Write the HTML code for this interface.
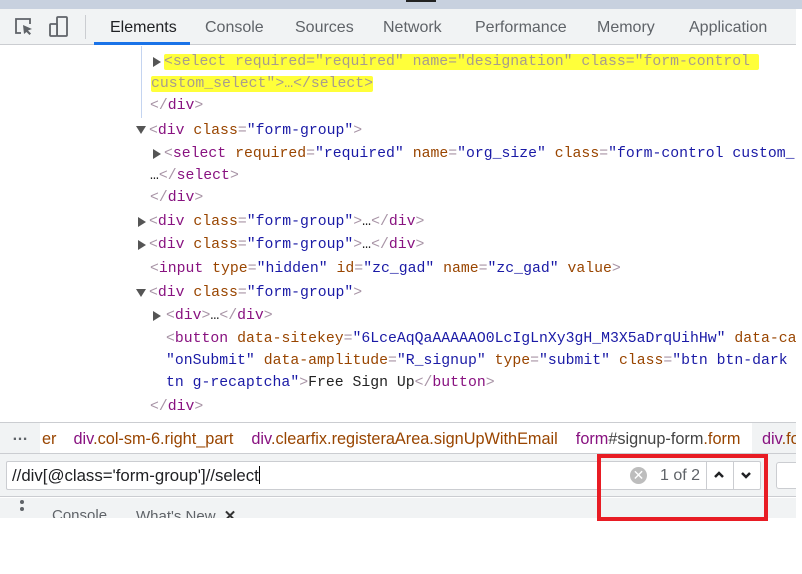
<!DOCTYPE html>
<html><head><meta charset="utf-8"><style>
*{margin:0;padding:0;box-sizing:border-box}
body{width:802px;height:574px;background:#fff;position:relative;overflow:hidden;font-family:"Liberation Sans",sans-serif}
.top{position:absolute;left:0;top:0;width:802px;height:9px;background:#c8d1df}
.tabs{position:absolute;left:0;top:9px;width:796px;height:36px;background:#f1f3f4;border-bottom:1px solid #cbcdd1}
.tab{position:absolute;top:10px;font-size:16px;color:#5f6368}
.code{position:absolute;font-family:"Liberation Mono",monospace;font-size:14.8px;white-space:pre;line-height:20px}
.t{color:#881280}.a{color:#994500}.v{color:#1a1aa6}.g{color:#a894a6}.k{color:#222}
.tri{position:absolute;width:0;height:0}
.r{border-top:5px solid transparent;border-bottom:5px solid transparent;border-left:8px solid #555}
.d{border-left:5px solid transparent;border-right:5px solid transparent;border-top:8px solid #555}
.hl{background:#ffff3a;color:#a89c8c;border-radius:2px}
</style></head><body>
<div class="top"></div>
<div style="position:absolute;left:406px;top:0;width:30px;height:2px;background:#222"></div>
<div class="tabs">
<svg style="position:absolute;left:13px;top:7px" width="22" height="22" viewBox="0 0 22 22"><path d="M8 17H3V3h14v5" fill="none" stroke="#5f6368" stroke-width="1.8"/><path d="M10 9l9 4-4 1.5 3 3-1.5 1.5-3-3L11 18z" fill="#5f6368"/></svg>
<svg style="position:absolute;left:47px;top:6px" width="24" height="24" viewBox="0 0 24 24"><rect x="10" y="2" width="10" height="19" rx="1" fill="none" stroke="#5f6368" stroke-width="1.8"/><rect x="3" y="9" width="7" height="12" rx="1" fill="#f1f3f4" stroke="#5f6368" stroke-width="1.8"/></svg>
<div style="position:absolute;left:85px;top:6px;width:1px;height:24px;background:#cbcdd1"></div>
<div class="tab" style="left:110px;color:#202124">Elements</div>
<div style="position:absolute;left:94px;top:33px;width:96px;height:3px;background:#1a73e8"></div>
<div class="tab" style="left:205px">Console</div>
<div class="tab" style="left:295px">Sources</div>
<div class="tab" style="left:383px">Network</div>
<div class="tab" style="left:475px">Performance</div>
<div class="tab" style="left:597px">Memory</div>
<div class="tab" style="left:689px">Application</div>
</div>
<div style="position:absolute;left:141px;top:46px;width:1px;height:72px;background:#c4d4f0"></div>

<div class="tri r" style="left:153px;top:57px"></div>
<div class="code" style="left:164px;top:52px"><span class="hl">&lt;select required="required" name="designation" class="form-control </span></div>
<div class="code" style="left:151px;top:74px"><span class="hl">custom_select"&gt;…&lt;/select&gt;</span></div>
<div class="code" style="left:150px;top:96px"><span class="g">&lt;/</span><span class="t">div</span><span class="g">&gt;</span></div>
<div class="tri d" style="left:136px;top:126px"></div>
<div class="code" style="left:149px;top:121px"><span class="g">&lt;</span><span class="t">div </span><span class="a">class</span><span class="g">=</span><span class="v">"form-group"</span><span class="g">&gt;</span></div>
<div class="tri r" style="left:153px;top:149px"></div>
<div class="code" style="left:164px;top:144px"><span class="g">&lt;</span><span class="t">select </span><span class="a">required</span><span class="g">=</span><span class="v">"required"</span> <span class="a">name</span><span class="g">=</span><span class="v">"org_size"</span> <span class="a">class</span><span class="g">=</span><span class="v">"form-control custom_</span></div>
<div class="code" style="left:150px;top:166px"><span class="k">…</span><span class="g">&lt;/</span><span class="t">select</span><span class="g">&gt;</span></div>
<div class="code" style="left:150px;top:188px"><span class="g">&lt;/</span><span class="t">div</span><span class="g">&gt;</span></div>
<div class="tri r" style="left:138px;top:217px"></div>
<div class="code" style="left:149px;top:212px"><span class="g">&lt;</span><span class="t">div </span><span class="a">class</span><span class="g">=</span><span class="v">"form-group"</span><span class="g">&gt;</span><span class="k">…</span><span class="g">&lt;/</span><span class="t">div</span><span class="g">&gt;</span></div>
<div class="tri r" style="left:138px;top:240px"></div>
<div class="code" style="left:149px;top:235px"><span class="g">&lt;</span><span class="t">div </span><span class="a">class</span><span class="g">=</span><span class="v">"form-group"</span><span class="g">&gt;</span><span class="k">…</span><span class="g">&lt;/</span><span class="t">div</span><span class="g">&gt;</span></div>
<div class="code" style="left:150px;top:259px"><span class="g">&lt;</span><span class="t">input </span><span class="a">type</span><span class="g">=</span><span class="v">"hidden"</span> <span class="a">id</span><span class="g">=</span><span class="v">"zc_gad"</span> <span class="a">name</span><span class="g">=</span><span class="v">"zc_gad"</span> <span class="a">value</span><span class="g">&gt;</span></div>
<div class="tri d" style="left:136px;top:289px"></div>
<div class="code" style="left:149px;top:283px"><span class="g">&lt;</span><span class="t">div </span><span class="a">class</span><span class="g">=</span><span class="v">"form-group"</span><span class="g">&gt;</span></div>
<div class="tri r" style="left:153px;top:311px"></div>
<div class="code" style="left:166px;top:306px"><span class="g">&lt;</span><span class="t">div</span><span class="g">&gt;</span><span class="k">…</span><span class="g">&lt;/</span><span class="t">div</span><span class="g">&gt;</span></div>
<div class="code" style="left:166px;top:329px"><span class="g">&lt;</span><span class="t">button </span><span class="a">data-sitekey</span><span class="g">=</span><span class="v">"6LceAqQaAAAAAO0LcIgLnXy3gH_M3X5aDrqUihHw"</span> <span class="a">data-ca</span></div>
<div class="code" style="left:166px;top:351px"><span class="v">"onSubmit"</span> <span class="a">data-amplitude</span><span class="g">=</span><span class="v">"R_signup"</span> <span class="a">type</span><span class="g">=</span><span class="v">"submit"</span> <span class="a">class</span><span class="g">=</span><span class="v">"btn btn-dark </span></div>
<div class="code" style="left:166px;top:373px"><span class="v">tn g-recaptcha"</span><span class="g">&gt;</span><span class="k">Free Sign Up</span><span class="g">&lt;/</span><span class="t">button</span><span class="g">&gt;</span></div>
<div class="code" style="left:150px;top:397px"><span class="g">&lt;/</span><span class="t">div</span><span class="g">&gt;</span></div>

<div style="position:absolute;left:0;top:422px;width:796px;height:32px;background:#fff;border-top:1px solid #cbcdd1;border-bottom:1px solid #cbcdd1;font-size:16.3px;white-space:nowrap;overflow:hidden">
<div style="position:absolute;left:0;top:0;width:40px;height:31px;background:#f1f3f4;color:#5f6368;font-size:16px;padding:4px 0 0 12px;font-weight:bold">…</div>
<div style="position:absolute;left:42px;top:7px"><span style="color:#994500">er</span><span style="margin-left:17px;color:#881280">div</span><span style="color:#994500">.col-sm-6.right_part</span><span style="margin-left:18px;color:#881280">div</span><span style="color:#994500">.clearfix.registeraArea.signUpWithEmail</span><span style="margin-left:18px;color:#881280">form</span><span style="color:#444">#signup-form</span><span style="color:#994500">.form</span></div>
<div style="position:absolute;left:752px;top:0;width:44px;height:31px;background:#f1f3f4;padding:7px 0 0 10px"><span style="color:#881280">div</span><span style="color:#994500">.fo</span></div>
</div>
<div style="position:absolute;left:0;top:454px;width:796px;height:43px;background:#f1f3f4;border-bottom:1px solid #cbcdd1"></div>
<div style="position:absolute;left:6px;top:461px;width:755px;height:29px;background:#fff;border:1px solid #cbcdd1;border-radius:2px"></div>
<div style="position:absolute;left:12px;top:466px;font-size:16.8px;color:#202124">//div[@class='form-group']//select<span style="display:inline-block;width:1px;height:18px;background:#000;vertical-align:-3px"></span></div>
<div style="position:absolute;left:630px;top:467px;width:17px;height:17px;border-radius:50%;background:#bdbdbd;color:#fff;font-size:14px;line-height:17px;text-align:center">✕</div>
<div style="position:absolute;left:660px;top:467px;font-size:16px;color:#5f6368">1 of 2</div>
<div style="position:absolute;left:706px;top:462px;width:1px;height:27px;background:#cbcdd1"></div>
<div style="position:absolute;left:733px;top:462px;width:1px;height:27px;background:#cbcdd1"></div>
<svg style="position:absolute;left:712px;top:469px" width="14" height="12"><path d="M3 8l4-4 4 4" fill="none" stroke="#202124" stroke-width="2.5"/></svg>
<svg style="position:absolute;left:739px;top:469px" width="14" height="12"><path d="M3 4l4 4 4-4" fill="none" stroke="#202124" stroke-width="2.5"/></svg>
<div style="position:absolute;left:776px;top:462px;width:20px;height:27px;background:#fff;border:1px solid #cbcdd1;border-right:none;border-radius:3px 0 0 3px"></div>
<div style="position:absolute;left:0;top:498px;width:796px;height:20px;background:#f1f3f4;overflow:hidden;font-size:15px;color:#5f6368">
<div style="position:absolute;left:20px;top:9px;width:4px;height:4px;border-radius:50%;background:#5f6368;box-shadow:0 -7px 0 #5f6368"></div>
<div style="position:absolute;left:52px;top:9px">Console</div>
<div style="position:absolute;left:136px;top:9px">What's New <b style="color:#333;margin-left:4px">✕</b></div>
</div>
<div style="position:absolute;left:597px;top:454px;width:171px;height:67px;border:4px solid #e81c24"></div>
</body></html>
